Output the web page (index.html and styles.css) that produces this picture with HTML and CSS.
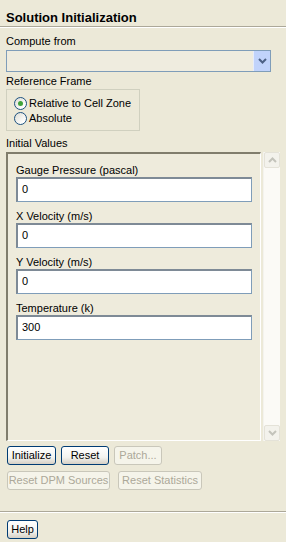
FILE: index.html
```html
<!DOCTYPE html>
<html>
<head>
<meta charset="utf-8">
<link rel="stylesheet" href="styles.css">
</head>
<body>
<div class="title">Solution Initialization</div>
<div class="content">
  <div class="label lbl-compute">Compute from</div>
  <div class="select">
    <div class="select-field"></div>
    <div class="select-btn">
      <svg width="9" height="6" viewBox="0 0 9 6"><path d="M1 1 L4.5 4.5 L8 1" fill="none" stroke="#4d6185" stroke-width="2"/></svg>
    </div>
  </div>
  <div class="label lbl-ref">Reference Frame</div>
  <div class="group">
    <div class="radio-row"><span class="radio checked"><span class="dot"></span></span><span>Relative to Cell Zone</span></div>
    <div class="radio-row"><span class="radio"></span><span>Absolute</span></div>
  </div>
  <div class="label lbl-init">Initial Values</div>
  <div class="scrollpane">
    <div class="viewport">
      <div class="field"><div class="label">Gauge Pressure (pascal)</div><div class="input">0</div></div>
      <div class="field"><div class="label">X Velocity (m/s)</div><div class="input">0</div></div>
      <div class="field"><div class="label">Y Velocity (m/s)</div><div class="input">0</div></div>
      <div class="field"><div class="label">Temperature (k)</div><div class="input">300</div></div>
    </div>
    <div class="scrollbar">
      <div class="sb-btn"><svg width="9" height="6" viewBox="0 0 9 6"><path d="M1 5 L4.5 1.5 L8 5" fill="none" stroke="#c3c3bb" stroke-width="2"/></svg></div>
      <div class="sb-track"></div>
      <div class="sb-btn"><svg width="9" height="6" viewBox="0 0 9 6"><path d="M1 1 L4.5 4.5 L8 1" fill="none" stroke="#c3c3bb" stroke-width="2"/></svg></div>
    </div>
  </div>
  <div class="btn-row row1">
    <div class="btn w-init">Initialize</div>
    <div class="btn w-reset">Reset</div>
    <div class="btn disabled w-patch">Patch...</div>
  </div>
  <div class="btn-row row2">
    <div class="btn disabled w-dpm">Reset DPM Sources</div>
    <div class="btn disabled w-stats">Reset Statistics</div>
  </div>
</div>
<div class="footer">
  <div class="btn w-help">Help</div>
</div>
</body>
</html>
```
FILE: styles.css
```css
html, body {
  margin: 0;
  padding: 0;
  background: #ece9d8;
  width: 286px;
  height: 542px;
  overflow: hidden;
}
body {
  font-family: "Liberation Sans", Arial, sans-serif;
  font-size: 11px;
  color: #000;
}
.title {
  height: 27px;
  box-sizing: border-box;
  padding: 10px 0 0 6px;
  font-weight: bold;
  font-size: 13px;
  line-height: 15px;
  border-bottom: 1px solid #aca899;
  box-shadow: 0 1px 0 #ffffff;
}
.content {
  padding: 0 6px;
}
.label {
  line-height: 13px;
  height: 13px;
  white-space: nowrap;
}
.lbl-compute { margin-top: 8px; }
.select {
  margin-top: 2px;
  height: 22px;
  width: 265px;
  box-sizing: border-box;
  border: 1px solid #7f9db9;
  display: flex;
  background: #efecdf;
}
.select-field { flex: 1; }
.select-btn {
  width: 17px;
  height: 20px;
  background: #c1d3fb;
  border-left: 1px solid #e6ecfb;
  display: flex;
  align-items: center;
  justify-content: center;
  box-sizing: border-box;
}
.lbl-ref { margin-top: 3px; }
.group {
  margin-top: 1px;
  width: 134px;
  height: 42px;
  box-sizing: border-box;
  border: 1px solid #d0d0bf;
  padding: 6px 0 0 7px;
}
.radio-row {
  display: flex;
  align-items: center;
  height: 15px;
  line-height: 13px;
}
.radio {
  width: 13px;
  height: 13px;
  box-sizing: border-box;
  border-radius: 50%;
  border: 1px solid #1c5180;
  background: linear-gradient(135deg, #dcdcd3 0%, #ffffff 80%);
  margin-right: 2px;
  display: flex;
  align-items: center;
  justify-content: center;
}
.dot {
  width: 5px;
  height: 5px;
  border-radius: 50%;
  background: #3fa33a;
}
.lbl-init { margin-top: 6px; }
.scrollpane {
  margin-top: 2px;
  display: flex;
  height: 289px;
  width: 275px;
}
.viewport {
  width: 255px;
  box-sizing: border-box;
  border-top: 2px solid #807d6c;
  border-left: 2px solid #807d6c;
  border-right: 1px solid #ffffff;
  border-bottom: 1px solid #ffffff;
  background: #eeebdc;
  padding: 10px 0 0 8px;
}
.field { margin-bottom: 8px; }
.field .label { height: 13px; }
.input {
  width: 236px;
  height: 25px;
  box-sizing: border-box;
  background: #ffffff;
  border: 1px solid #7f9db9;
  border-top: 2px solid #7e8a96;
  border-left: 2px solid #7e8a96;
  padding-left: 4px;
  line-height: 20px;
}
.scrollbar {
  margin-left: 2px;
  width: 17px;
  display: flex;
  flex-direction: column;
  background: #fbfaf6;
  border-left: 1px solid #f4f3ee;
  box-sizing: border-box;
}
.sb-btn {
  height: 16px;
  box-sizing: border-box;
  border: 1px solid #e4e2d8;
  border-radius: 2px;
  background: #f3f2ec;
  display: flex;
  align-items: center;
  justify-content: center;
}
.sb-track { flex: 1; }
.btn-row {
  display: flex;
  gap: 4px;
}
.row1 { margin-top: 5px; }
.row2 { margin-top: 6px; gap: 7px; }
.btn {
  height: 19px;
  box-sizing: border-box;
  border: 1px solid #003c74;
  border-radius: 3px;
  background: linear-gradient(#ffffff 0%, #f3f3ef 60%, #d6d0c5 100%);
  display: flex;
  align-items: center;
  justify-content: center;
  line-height: 13px;
  white-space: nowrap;
  margin-left: 1px;
}
.btn.disabled {
  border-color: #c9c7ba;
  background: #f5f4ea;
  color: #aca899;
}
.w-init { width: 49px; }
.w-reset { width: 48px; }
.w-patch { width: 48px; }
.w-dpm { width: 103px; }
.w-stats { width: 84px; }
.w-help { width: 31px; }
.footer {
  margin-top: 21px;
  border-top: 1px solid #aca899;
  box-shadow: inset 0 1px 0 #ffffff;
  padding: 8px 6px 0 6px;
}
```
